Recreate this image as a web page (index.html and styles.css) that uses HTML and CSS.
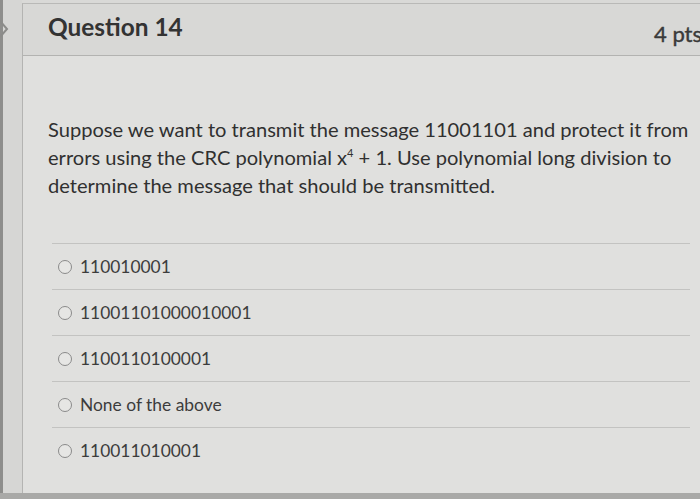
FILE: index.html
```html
<!DOCTYPE html>
<html>
<head>
<meta charset="utf-8">
<link rel="stylesheet" href="styles.css">
</head>
<body>
<div class="page">
  <div class="rail">
    <svg class="chev" width="10" height="20" viewBox="0 0 10 20"><path d="M0 2 L7 10 L0 18" fill="none" stroke="#8c8c8a" stroke-width="2"/></svg>
  </div>
  <div class="card">
    <div class="head">
      <div class="title">Question 14</div>
      <div class="pts">4 pts</div>
    </div>
    <div class="body">
      <p class="q">Suppose we want to transmit the message 11001101 and protect it from errors using the CRC polynomial x<sup>4</sup> + 1. Use polynomial long division to determine the message that should be transmitted.</p>
      <ul class="answers">
        <li class="ans"><span class="radio"></span><span class="lbl">110010001</span></li>
        <li class="ans"><span class="radio"></span><span class="lbl">11001101000010001</span></li>
        <li class="ans"><span class="radio"></span><span class="lbl">1100110100001</span></li>
        <li class="ans"><span class="radio"></span><span class="lbl">None of the above</span></li>
        <li class="ans"><span class="radio"></span><span class="lbl">110011010001</span></li>
      </ul>
    </div>
  </div>
</div>
</body>
</html>
```

FILE: styles.css
```css
html, body {
  margin: 0;
  padding: 0;
  width: 700px;
  height: 499px;
  overflow: hidden;
  background: #a9a9a7;
  font-family: Lato, "Liberation Sans", sans-serif;
}
.page {
  display: flex;
  height: 493px;
  background: #d9d9d7;
}
.rail {
  width: 19px;
  flex: none;
  border-left: 3px solid #8e8e8c;
  background: #d6d6d4;
  position: relative;
}
.chev {
  position: absolute;
  left: -3px;
  top: 19px;
}
.card {
  flex: 1;
  margin-top: 3px;
  border-top: 1px solid #b9b9b7;
  border-left: 1px solid #b4b4b2;
  background: #dfdfdd;
  display: flex;
  flex-direction: column;
  min-width: 0;
}
.head {
  height: 51px;
  display: flex;
  align-items: center;
  justify-content: space-between;
  padding: 0 0 0 25px;
  background: #d8d8d6;
  border-bottom: 1px solid #b3b3b1;
  color: #333333;
}
.title {
  font-weight: 700;
  font-size: 24.4px;
  margin-top: -6px;
}
.pts {
  font-size: 22px;
  font-weight: 400;
  -webkit-text-stroke: 0.4px #3a3a3a;
  margin-right: -2px;
  margin-top: 8px;
  color: #3a3a3a;
}
.body {
  padding: 59px 0 0 25px;
  flex: 1;
  background: #e0e0de;
}
.q {
  margin: 0;
  font-size: 20.1px;
  line-height: 28px;
  color: #303030;
  width: 652px;
}
.q sup {
  font-size: 11px;
  line-height: 0;
  vertical-align: super;
}
.answers {
  list-style: none;
  margin: 44px 0 0 4px;
  padding: 0;
  width: 638px;
}
.ans {
  height: 45px;
  border-top: 1px solid #c3c3c1;
  display: flex;
  align-items: center;
  color: #3c3c3c;
  font-size: 17.4px;
}
.radio {
  width: 12px;
  height: 12px;
  border: 1.5px solid #8a8a8a;
  border-radius: 50%;
  margin: 0 8px 0 6px;
  flex: none;
  background: #e6e6e4;
}
```
